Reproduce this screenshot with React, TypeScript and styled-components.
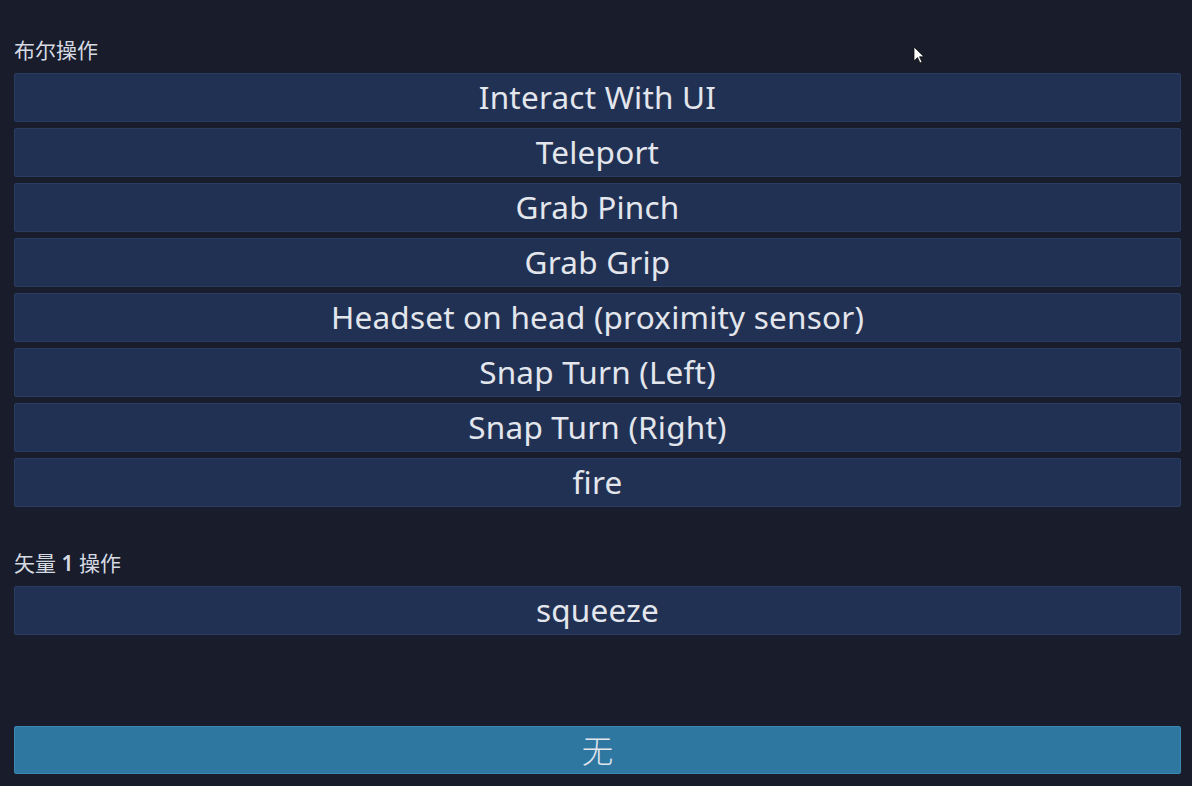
import React from "react";
import styled, { createGlobalStyle } from "styled-components";

const Global = createGlobalStyle`
  html, body { margin: 0; padding: 0; background: #181c2b; }
  body { width: 1192px; height: 786px; overflow: hidden; font-family: "Noto Sans", "Noto Sans CJK SC", sans-serif; }
`;

const Page = styled.div`
  position: relative;
  width: 1192px;
  height: 786px;
  box-sizing: border-box;
  padding: 36px 11px 0 14px;
  display: flex;
  flex-direction: column;
  background: #181c2b;
`;

const SectionLabel = styled.div<{ $top?: number }>`
  font-family: "Noto Sans", "Noto Sans CJK SC", sans-serif;
  font-size: 21px;
  line-height: 28px;
  color: #d6dae2;
  margin-top: ${(p) => p.$top ?? 0}px;
  margin-bottom: 9px;
  b { font-weight: 600; }
`;

const List = styled.div`
  display: flex;
  flex-direction: column;
  gap: 6px;
`;

const ActionButton = styled.div<{ $active?: boolean }>`
  height: ${(p) => (p.$active ? 48 : 49)}px;
  box-sizing: border-box;
  padding-bottom: 2px;
  display: flex;
  align-items: center;
  justify-content: center;
  background: ${(p) => (p.$active ? "#2d77a1" : "#213153")};
  border: 1px solid ${(p) => (p.$active ? "#3a87b3" : "#2a3c62")};
  border-radius: 2px;
  color: #e3e6ec;
  font-family: "Noto Sans", "Noto Sans CJK SC", sans-serif;
  font-size: 31.5px;
  font-weight: ${(p) => (p.$active ? 300 : 400)};
  letter-spacing: 0.2px;
  white-space: nowrap;
`;

const Spacer = styled.div`
  flex: 1;
`;

const Bottom = styled.div`
  padding-bottom: 12px;
`;

const Cursor = styled.svg`
  position: absolute;
  left: 913px;
  top: 46px;
`;

const boolActions = [
  "Interact With UI",
  "Teleport",
  "Grab Pinch",
  "Grab Grip",
  "Headset on head (proximity sensor)",
  "Snap Turn (Left)",
  "Snap Turn (Right)",
  "fire",
];

export default function App() {
  return (
    <>
      <Global />
      <Page>
        <SectionLabel>布尔操作</SectionLabel>
        <List>
          {boolActions.map((a) => (
            <ActionButton key={a}>{a}</ActionButton>
          ))}
        </List>
        <SectionLabel $top={42}>
          矢量 <b>1</b> 操作
        </SectionLabel>
        <List>
          <ActionButton>squeeze</ActionButton>
        </List>
        <Spacer />
        <Bottom>
          <ActionButton $active>无</ActionButton>
        </Bottom>
        <Cursor width="14" height="20" viewBox="0 0 14 20">
          <path d="M1 1 L1 15 L4.5 11.5 L7 17 L9 16 L6.5 10.8 L11 10.8 Z" fill="#ffffff" stroke="#111" strokeWidth="0.8" />
        </Cursor>
      </Page>
    </>
  );
}
